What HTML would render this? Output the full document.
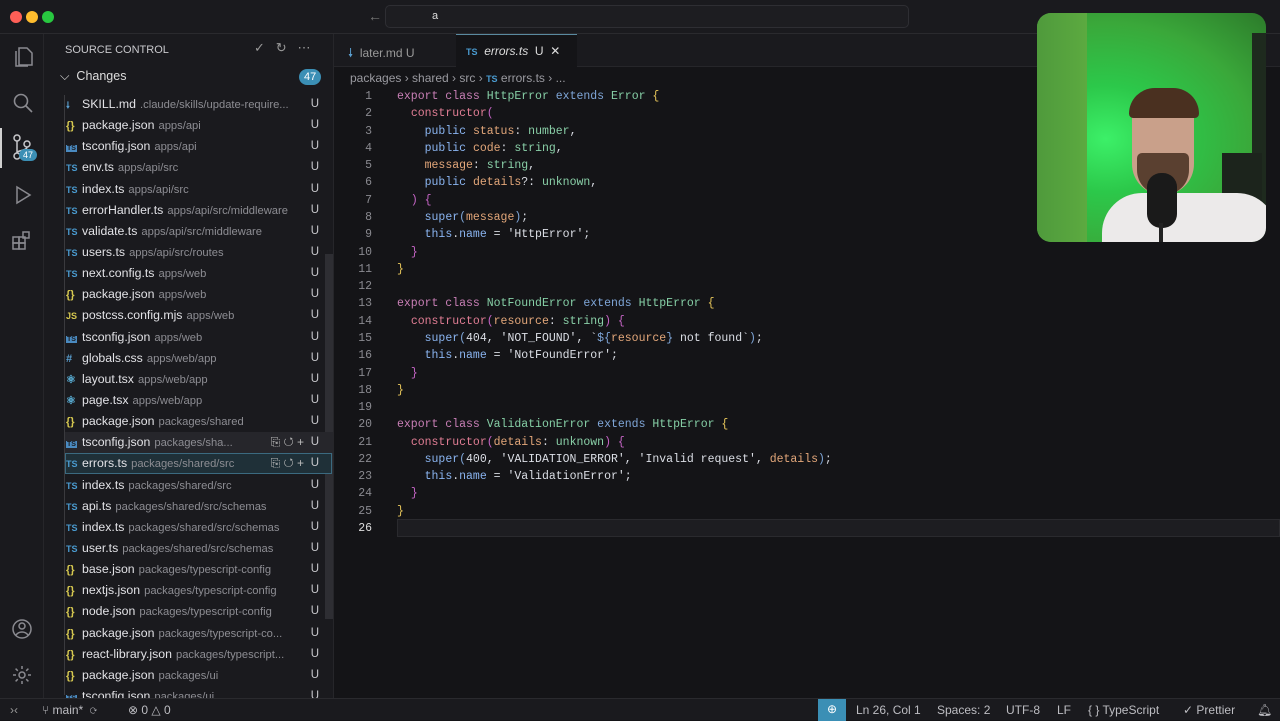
<!DOCTYPE html>
<html><head><meta charset="utf-8"><style>
*{margin:0;padding:0;box-sizing:border-box}
body{width:1280px;height:720px;background:#141417;font-family:"Liberation Sans",sans-serif;color:#cfcfd4;overflow:hidden;position:relative}
.abs{position:absolute}
#title{left:0;top:0;width:1280px;height:34px;background:#1a1a1e;border-bottom:1px solid #2a2a2e}
.dot{width:12px;height:12px;border-radius:50%;top:11px}
#search{left:385px;top:5px;width:524px;height:23px;border:1px solid #2e2e33;border-radius:5px;background:#1d1d21;font-size:11px;color:#ddd;padding:4px 0 0 46px}
#act{left:0;top:34px;width:44px;height:664px;background:#1a1a1e;border-right:1px solid #26262a}
#side{left:44px;top:34px;width:290px;height:664px;background:#1a1a1e;border-right:1px solid #26262a}
.row{position:absolute;left:20px;width:270px;height:21px;font-size:12.3px;line-height:21px;white-space:nowrap}
.row .ic{display:inline-block;width:16px;font-size:9px;font-weight:bold;color:#4a9bd0;text-align:left;margin-left:2px}
.row .p{color:#8d8d93;font-size:11.2px;margin-left:4px}
.row .u{position:absolute;right:15px;top:0;color:#c8c8cc;font-size:11.5px}
.js{color:#d6c850!important}
.br{color:#d6c850!important;font-size:11px!important}
#tabs{left:334px;top:34px;width:946px;height:33px;background:#1a1a1e;border-bottom:1px solid #26262a}
.code{position:absolute;left:334px;top:88px;font-family:"Liberation Mono",monospace;font-size:11.5px;line-height:17.28px;white-space:pre}
.ln{position:absolute;left:334px;top:88px;width:38px;text-align:right;font-family:"Liberation Mono",monospace;font-size:11.5px;line-height:17.28px;color:#8a8a90;white-space:pre}
.k{color:#c97fb6}.e{color:#7fa6d8}.c{color:#86cfa6}.f{color:#e07d94}.o{color:#e3a77a}.t{color:#8ad0a8}.b{color:#8ab4f0}.s{color:#dcdfe6}.y{color:#e6c55a}.m{color:#c464c4}.w{color:#d6d9e0}
#status{left:0;top:698px;width:1280px;height:22px;background:#1a1a1e;border-top:1px solid #2a2a2e;font-size:12px;color:#bdbdc2}
#status span{position:absolute;top:4px}
</style></head><body>
<div id="title" class="abs"></div>
<div class="abs dot" style="left:10px;background:#fe5f57"></div>
<div class="abs dot" style="left:26px;background:#febc2e"></div>
<div class="abs dot" style="left:42px;background:#28c840"></div>
<div class="abs" style="left:368px;top:8px;color:#777;font-size:14px">←&nbsp;&nbsp;→</div>
<div id="search" class="abs">a</div>

<div id="act" class="abs">
<svg class="abs" style="left:12px;top:10px" width="22" height="24" viewBox="0 0 22 24" fill="none" stroke="#8a8a90" stroke-width="1.5"><path d="M7 4h8l5 5v12H7z"/><path d="M4 7v15h12"/></svg>
<svg class="abs" style="left:12px;top:58px" width="22" height="22" viewBox="0 0 22 22" fill="none" stroke="#8a8a90" stroke-width="1.6"><circle cx="9" cy="9" r="6.5"/><path d="M14 14l6 6"/></svg>
<div class="abs" style="left:0;top:94px;width:2px;height:40px;background:#d0d0d0"></div>
<svg class="abs" style="left:12px;top:100px" width="22" height="26" viewBox="0 0 22 26" fill="none" stroke="#c8c8cc" stroke-width="1.5"><circle cx="5" cy="4" r="3"/><circle cx="15" cy="10" r="3"/><circle cx="5" cy="22" r="3"/><path d="M5 7v12M15 13c0 4-10 3-10 6"/></svg>
<div class="abs" style="left:19px;top:115px;background:#3b8fb5;color:#fff;font-size:9px;border-radius:8px;padding:1px 4px">47</div>
<svg class="abs" style="left:11px;top:150px" width="22" height="22" viewBox="0 0 22 22" fill="none" stroke="#8a8a90" stroke-width="1.5"><path d="M6 3l13 8-13 8z"/></svg>
<svg class="abs" style="left:11px;top:196px" width="22" height="22" viewBox="0 0 22 22" fill="none" stroke="#8a8a90" stroke-width="1.5"><rect x="2" y="7" width="6" height="6"/><rect x="8" y="7" width="6" height="6"/><rect x="2" y="13" width="6" height="6"/><rect x="8" y="13" width="6" height="6"/><rect x="12" y="2" width="6" height="6"/></svg>
<svg class="abs" style="left:11px;top:584px" width="22" height="22" viewBox="0 0 22 22" fill="none" stroke="#8a8a90" stroke-width="1.5"><circle cx="11" cy="11" r="9"/><circle cx="11" cy="8" r="3"/><path d="M5 17c3-4 9-4 12 0"/></svg>
<svg class="abs" style="left:11px;top:630px" width="22" height="22" viewBox="0 0 22 22" fill="none" stroke="#8a8a90" stroke-width="1.5"><circle cx="11" cy="11" r="3"/><path d="M11 2v3M11 17v3M2 11h3M17 11h3M4.6 4.6l2.2 2.2M15.2 15.2l2.2 2.2M4.6 17.4l2.2-2.2M15.2 6.8l2.2-2.2"/></svg>
</div>

<div id="side" class="abs">
<div class="abs" style="left:21px;top:10px;font-size:11px;color:#c8c8cc">SOURCE CONTROL</div>
<div class="abs" style="left:210px;top:6px;font-size:13px;color:#999">✓&nbsp;&nbsp;&nbsp;↻&nbsp;&nbsp;&nbsp;⋯</div>
<div class="abs" style="left:16px;top:35px;font-size:12.5px;color:#ddd">⌵&nbsp; Changes</div>
<div class="abs" style="left:255px;top:35px;background:#3b8fb5;color:#fff;font-size:11px;border-radius:9px;padding:2px 5px">47</div>
<div class="abs" style="left:281px;top:220px;width:8px;height:365px;background:#2e2e33"></div>
<div class="abs" style="left:20px;top:61px;width:1px;height:600px;background:#3a3a3e"></div>
<div class="abs" style="left:21px;top:398px;width:268px;height:21px;background:#26262b"></div>
<div class="abs" style="left:21px;top:419px;width:267px;height:21px;background:#1f3038;border:1px solid #3b6a80"></div>
<div id="rows"></div>
</div>

<div id="tabs" class="abs">
<div class="abs" style="left:14px;top:10px;font-size:12px;color:#999"><span style="color:#5a9fd0">🠗</span>&nbsp; later.md U</div>
<div class="abs" style="left:122px;top:0;width:121px;height:33px;background:#141417;border-top:1px solid #5a8aa0"></div>
<div class="abs" style="left:132px;top:10px;font-size:12px;color:#ddd"><span style="color:#4a9bd0;font-size:9px;font-weight:bold">TS</span>&nbsp; <i>errors.ts</i>&nbsp; U&nbsp; ✕</div>
</div>
<div class="abs" style="left:350px;top:71px;font-size:12px;color:#9a9aa0">packages › shared › src › <span style="color:#4a9bd0;font-size:9px;font-weight:bold">TS</span> errors.ts › ...</div>
<div class="abs" style="left:397px;top:519px;width:883px;height:18px;background:#1d1d21;border:1px solid #2a2a2e"></div>
<div class="ln">1
2
3
4
5
6
7
8
9
10
11
12
13
14
15
16
17
18
19
20
21
22
23
24
25
<span style="color:#ddd">26</span></div>
<div class="code" style="left:397px"><span class="k">export class</span> <span class="c">HttpError</span> <span class="e">extends</span> <span class="c">Error</span> <span class="y">{</span>
  <span class="f">constructor</span><span class="m">(</span>
    <span class="b">public</span> <span class="o">status</span><span class="w">:</span> <span class="t">number</span><span class="w">,</span>
    <span class="b">public</span> <span class="o">code</span><span class="w">:</span> <span class="t">string</span><span class="w">,</span>
    <span class="o">message</span><span class="w">:</span> <span class="t">string</span><span class="w">,</span>
    <span class="b">public</span> <span class="o">details</span><span class="w">?:</span> <span class="t">unknown</span><span class="w">,</span>
  <span class="m">) {</span>
    <span class="b">super</span><span class="e">(</span><span class="o">message</span><span class="e">)</span><span class="w">;</span>
    <span class="b">this</span><span class="w">.</span><span class="b">name</span> <span class="w">=</span> <span class="s">'HttpError'</span><span class="w">;</span>
  <span class="m">}</span>
<span class="y">}</span>

<span class="k">export class</span> <span class="c">NotFoundError</span> <span class="e">extends</span> <span class="c">HttpError</span> <span class="y">{</span>
  <span class="f">constructor</span><span class="m">(</span><span class="o">resource</span><span class="w">:</span> <span class="t">string</span><span class="m">) {</span>
    <span class="b">super</span><span class="e">(</span><span class="s">404, 'NOT_FOUND', `</span><span class="e">${</span><span class="o">resource</span><span class="e">}</span><span class="s"> not found`</span><span class="e">)</span><span class="w">;</span>
    <span class="b">this</span><span class="w">.</span><span class="b">name</span> <span class="w">=</span> <span class="s">'NotFoundError'</span><span class="w">;</span>
  <span class="m">}</span>
<span class="y">}</span>

<span class="k">export class</span> <span class="c">ValidationError</span> <span class="e">extends</span> <span class="c">HttpError</span> <span class="y">{</span>
  <span class="f">constructor</span><span class="m">(</span><span class="o">details</span><span class="w">:</span> <span class="t">unknown</span><span class="m">) {</span>
    <span class="b">super</span><span class="e">(</span><span class="s">400, 'VALIDATION_ERROR', 'Invalid request', </span><span class="o">details</span><span class="e">)</span><span class="w">;</span>
    <span class="b">this</span><span class="w">.</span><span class="b">name</span> <span class="w">=</span> <span class="s">'ValidationError'</span><span class="w">;</span>
  <span class="m">}</span>
<span class="y">}</span>
</div>

<div class="abs" style="left:1037px;top:13px;width:229px;height:229px;border-radius:14px;overflow:hidden;background:radial-gradient(ellipse at 30% 55%,#3cf068 0%,#2cc84a 30%,#3aa83a 65%,#2c7a2a 100%)">
<div class="abs" style="left:0;top:0;width:50px;height:229px;background:linear-gradient(90deg,#4f9a3c,#5caa40)"></div>
<div class="abs" style="left:215px;top:20px;width:14px;height:209px;background:#1e2a1e"></div>
<div class="abs" style="left:185px;top:140px;width:40px;height:70px;background:#1c241c"></div>
<div class="abs" style="left:95px;top:82px;width:62px;height:100px;border-radius:30px 30px 40px 40px;background:#c9a08a"></div>
<div class="abs" style="left:92px;top:75px;width:70px;height:30px;border-radius:30px 30px 5px 5px;background:#4a3020"></div>
<div class="abs" style="left:100px;top:140px;width:52px;height:42px;border-radius:5px 5px 25px 25px;background:#5a4030"></div>
<div class="abs" style="left:65px;top:180px;width:175px;height:60px;border-radius:40px 40px 0 0;background:#eceaea"></div>
<div class="abs" style="left:110px;top:160px;width:30px;height:55px;border-radius:14px;background:#1a1a1a"></div>
<div class="abs" style="left:122px;top:210px;width:4px;height:20px;background:#222"></div>
</div>

<div id="status" class="abs">
<span style="left:10px;color:#999">›‹</span>
<span style="left:42px">⑂ main*&nbsp; ⟳</span>
<span style="left:128px">⊗ 0 △ 0</span>
<span style="left:818px;top:0;width:28px;height:22px;background:#3b8fb5;color:#fff;text-align:center;padding-top:3px">⊕</span>
<span style="left:856px">Ln 26, Col 1</span>
<span style="left:937px">Spaces: 2</span>
<span style="left:1006px">UTF-8</span>
<span style="left:1057px">LF</span>
<span style="left:1088px">{ } TypeScript</span>
<span style="left:1183px">✓ Prettier</span>
<span style="left:1257px">🔔︎</span>
</div>

<script>
const R=[["md","SKILL.md",".claude/skills/update-require..."],["br","package.json","apps/api"],["tsc","tsconfig.json","apps/api"],["ts","env.ts","apps/api/src"],["ts","index.ts","apps/api/src"],["ts","errorHandler.ts","apps/api/src/middleware"],["ts","validate.ts","apps/api/src/middleware"],["ts","users.ts","apps/api/src/routes"],["ts","next.config.ts","apps/web"],["br","package.json","apps/web"],["js","postcss.config.mjs","apps/web"],["tsc","tsconfig.json","apps/web"],["css","globals.css","apps/web/app"],["rx","layout.tsx","apps/web/app"],["rx","page.tsx","apps/web/app"],["br","package.json","packages/shared"],["tsc","tsconfig.json","packages/sha..."],["ts","errors.ts","packages/shared/src"],["ts","index.ts","packages/shared/src"],["ts","api.ts","packages/shared/src/schemas"],["ts","index.ts","packages/shared/src/schemas"],["ts","user.ts","packages/shared/src/schemas"],["br","base.json","packages/typescript-config"],["br","nextjs.json","packages/typescript-config"],["br","node.json","packages/typescript-config"],["br","package.json","packages/typescript-co..."],["br","react-library.json","packages/typescript..."],["br","package.json","packages/ui"],["tsc","tsconfig.json","packages/ui"]];
let h="";R.forEach((r,i)=>{const top=60+i*21.14;let ic={md:'<span class="ic" style="color:#5a9fd0">🠗</span>',br:'<span class="ic br">{}</span>',tsc:'<span class="ic"><span style="background:#4a8ac0;color:#1a1a1e;font-size:7px;padding:0 1px">TS</span></span>',ts:'<span class="ic">TS</span>',js:'<span class="ic js">JS</span>',css:'<span class="ic" style="color:#5a9fd0;font-size:11px">#</span>',rx:'<span class="ic" style="color:#5ab0d8;font-size:11px">⚛</span>'}[r[0]];
let act=(i==16||i==17)?'<span style="position:absolute;right:30px;color:#bbb;font-size:12px">⎘ ↺ +</span>':'';
h+=`<div class="row" style="top:${top}px">${ic}<span style="color:#e2e2e6">${r[1]}</span><span class="p">${r[2]}</span>${act}<span class="u">U</span></div>`});
document.getElementById("rows").innerHTML=h;
</script>
</body></html>
